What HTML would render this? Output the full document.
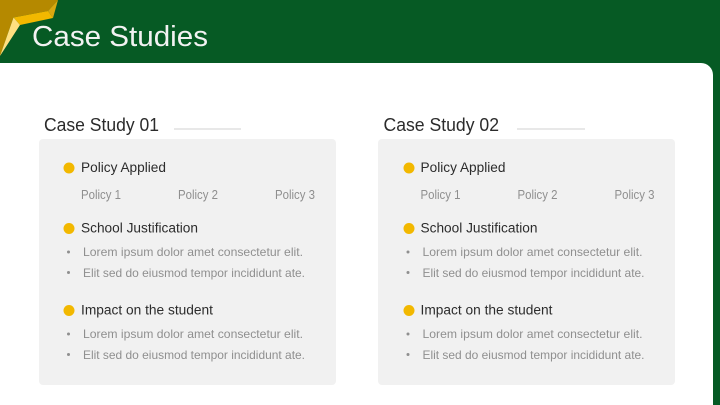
<!DOCTYPE html>
<html>
<head>
<meta charset="utf-8">
<style>
html,body{margin:0;padding:0;width:720px;height:405px;overflow:hidden;background:#065a24}
svg{display:block}
text{font-family:"Liberation Sans",sans-serif;filter:blur(.25px)}
.h{font-size:13.5px;fill:#2c2c2c}
.p{font-size:12.5px;fill:#8f8f8f}
.b{font-size:12px;fill:#8f8f8f}
.t{font-size:18.5px;fill:#2b2b2b}
</style>
</head>
<body>
<svg width="720" height="405" viewBox="0 0 720 405" xmlns="http://www.w3.org/2000/svg">
<rect width="720" height="405" fill="#065a24"/>
<path d="M0 63H701a12 12 0 0 1 12 12V405H0Z" fill="#fff"/>
<polygon points="0,0 58,0 48,11 13.5,17.5 0,56" fill="#b58900"/>
<polygon points="13.5,17.5 48,11 53,18 20,25" fill="#f2b800"/>
<polygon points="48,11 58,0 53,18" fill="#d9a810"/>
<polygon points="13.5,17.5 20,25 0,56" fill="#ffdf80"/>
<text x="32" y="46" font-size="28.500" fill="#f2f2f2" textLength="176" lengthAdjust="spacingAndGlyphs">Case Studies</text>

<g>
<text class="t" x="44" y="131" textLength="115" lengthAdjust="spacingAndGlyphs">Case Study 01</text>
<rect x="174" y="128" width="67" height="2" fill="#e8e8e8"/>
<rect x="39" y="139" width="297" height="246" rx="4" fill="#f1f1f1"/>
<circle cx="69" cy="168" r="5.500" fill="#f2b800"/>
<text class="h" x="81" y="172" textLength="85" lengthAdjust="spacingAndGlyphs">Policy Applied</text>
<text class="p" x="81" y="199" textLength="40" lengthAdjust="spacingAndGlyphs">Policy 1</text>
<text class="p" x="178" y="199" textLength="40" lengthAdjust="spacingAndGlyphs">Policy 2</text>
<text class="p" x="275" y="199" textLength="40" lengthAdjust="spacingAndGlyphs">Policy 3</text>
<circle cx="69" cy="228.500" r="5.500" fill="#f2b800"/>
<text class="h" x="81" y="232.500" textLength="117" lengthAdjust="spacingAndGlyphs">School Justification</text>
<circle cx="68.500" cy="252" r="1.500" fill="#8f8f8f"/>
<text class="b" x="83" y="256" textLength="220" lengthAdjust="spacingAndGlyphs">Lorem ipsum dolor  amet consectetur elit.</text>
<circle cx="68.500" cy="272.500" r="1.500" fill="#8f8f8f"/>
<text class="b" x="83" y="277" textLength="222" lengthAdjust="spacingAndGlyphs">Elit sed do eiusmod tempor incididunt ate.</text>
<circle cx="69" cy="310.500" r="5.500" fill="#f2b800"/>
<text class="h" x="81" y="314.500" textLength="132" lengthAdjust="spacingAndGlyphs">Impact on the student</text>
<circle cx="68.500" cy="334" r="1.500" fill="#8f8f8f"/>
<text class="b" x="83" y="338" textLength="220" lengthAdjust="spacingAndGlyphs">Lorem ipsum dolor  amet consectetur elit.</text>
<circle cx="68.500" cy="354.500" r="1.500" fill="#8f8f8f"/>
<text class="b" x="83" y="359" textLength="222" lengthAdjust="spacingAndGlyphs">Elit sed do eiusmod tempor incididunt ate.</text>
</g>

<g>
<text class="t" x="383.500" y="131" textLength="115.500" lengthAdjust="spacingAndGlyphs">Case Study 02</text>
<rect x="517" y="128" width="68" height="2" fill="#e8e8e8"/>
<rect x="378" y="139" width="297" height="246" rx="4" fill="#f1f1f1"/>
<circle cx="409" cy="168" r="5.500" fill="#f2b800"/>
<text class="h" x="420.500" y="172" textLength="85" lengthAdjust="spacingAndGlyphs">Policy Applied</text>
<text class="p" x="420.500" y="199" textLength="40" lengthAdjust="spacingAndGlyphs">Policy 1</text>
<text class="p" x="517.500" y="199" textLength="40" lengthAdjust="spacingAndGlyphs">Policy 2</text>
<text class="p" x="614.500" y="199" textLength="40" lengthAdjust="spacingAndGlyphs">Policy 3</text>
<circle cx="409" cy="228.500" r="5.500" fill="#f2b800"/>
<text class="h" x="420.500" y="232.500" textLength="117" lengthAdjust="spacingAndGlyphs">School Justification</text>
<circle cx="408" cy="252" r="1.500" fill="#8f8f8f"/>
<text class="b" x="422.500" y="256" textLength="220" lengthAdjust="spacingAndGlyphs">Lorem ipsum dolor  amet consectetur elit.</text>
<circle cx="408" cy="272.500" r="1.500" fill="#8f8f8f"/>
<text class="b" x="422.500" y="277" textLength="222" lengthAdjust="spacingAndGlyphs">Elit sed do eiusmod tempor incididunt ate.</text>
<circle cx="409" cy="310.500" r="5.500" fill="#f2b800"/>
<text class="h" x="420.500" y="314.500" textLength="132" lengthAdjust="spacingAndGlyphs">Impact on the student</text>
<circle cx="408" cy="334" r="1.500" fill="#8f8f8f"/>
<text class="b" x="422.500" y="338" textLength="220" lengthAdjust="spacingAndGlyphs">Lorem ipsum dolor  amet consectetur elit.</text>
<circle cx="408" cy="354.500" r="1.500" fill="#8f8f8f"/>
<text class="b" x="422.500" y="359" textLength="222" lengthAdjust="spacingAndGlyphs">Elit sed do eiusmod tempor incididunt ate.</text>
</g>
</svg>
</body>
</html>
